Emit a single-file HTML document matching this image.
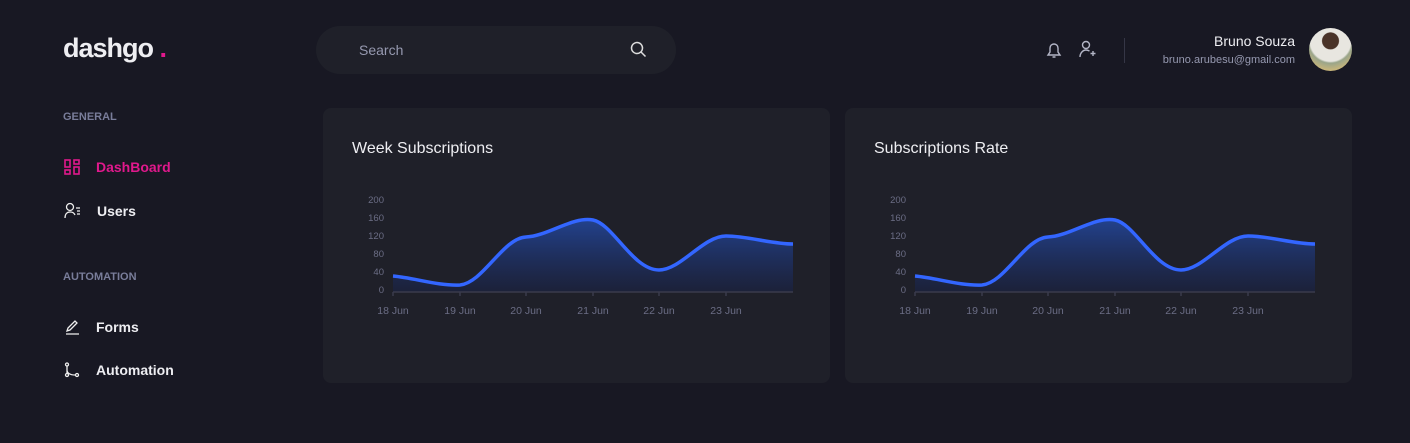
<!DOCTYPE html>
<html><head><style>
*{margin:0;padding:0;box-sizing:border-box}
body{width:1410px;height:443px;background:#181823;font-family:"Liberation Sans",sans-serif;color:#eeeef2;position:relative;overflow:hidden}
.abs{position:absolute}
.logo{left:63px;top:33px;font-size:27px;font-weight:bold;letter-spacing:-1px}
.logo span{color:#e0188c}
.sec{left:63px;font-size:11px;font-weight:bold;color:#797d9a}
.nav{left:64px;display:flex;align-items:center;font-size:14px;font-weight:bold}
.nav svg{margin-right:16px}
.search{left:316px;top:26px;width:360px;height:48px;border-radius:24px;background:#1f2029}
.search span{position:absolute;left:43px;top:16px;font-size:14px;color:#9699b0}
.card{top:108px;width:507px;height:275px;background:#1f2029;border-radius:8px}
.card h2{position:absolute;left:29px;top:32px;font-size:16px;font-weight:normal}
</style></head><body>
<div class="abs logo">dashgo<span> .</span></div>
<div class="abs sec" style="top:111px">GENERAL</div>
<div class="abs nav" style="top:159px;color:#e0188c"><svg width="16" height="16" viewBox="0 0 16 16" fill="none" stroke="#e0188c" stroke-width="1.6"><rect x="1" y="1" width="5" height="7"/><rect x="10" y="1" width="5" height="4"/><rect x="1" y="11" width="5" height="4"/><rect x="10" y="8" width="5" height="7"/></svg>DashBoard</div>
<div class="abs nav" style="top:202px"><svg width="17" height="17" viewBox="0 0 17 17" fill="none" stroke="#eee" stroke-width="1.3"><circle cx="6" cy="5" r="3.5"/><path d="M1 16c0-4 2-6 5-6s4 1 5 3M12 6h4M13 9h3M13 12h3"/></svg>Users</div>
<div class="abs sec" style="top:271px">AUTOMATION</div>
<div class="abs nav" style="top:319px"><svg width="16" height="16" viewBox="0 0 16 16" fill="none" stroke="#eee" stroke-width="1.3"><path d="M2 15h13M3 12l1-3 7-7 2 2-7 7z"/></svg>Forms</div>
<div class="abs nav" style="top:362px"><svg width="16" height="16" viewBox="0 0 16 16" fill="none" stroke="#eee" stroke-width="1.3"><circle cx="3" cy="2.5" r="1.5"/><circle cx="13" cy="13" r="1.5"/><circle cx="3" cy="13" r="1.5"/><path d="M3 4v7M3 8c0 3 3 5 8 5"/></svg>Automation</div>

<div class="abs search"><span>Search</span><svg class="abs" style="left:314px;top:15px" width="17" height="17" viewBox="0 0 17 17" fill="none" stroke="#ddd" stroke-width="1.5"><circle cx="7" cy="7" r="5.5"/><path d="M11 11l4.5 4.5"/></svg></div>

<svg class="abs" style="left:1045px;top:41px" width="18" height="18" viewBox="0 0 18 18" fill="none" stroke="#b3b5c6" stroke-width="1.4"><path d="M3 14h12l-2-3V7a4 4 0 0 0-8 0v4zM7.5 16h3"/></svg>
<svg class="abs" style="left:1079px;top:40px" width="18" height="18" viewBox="0 0 18 18" fill="none" stroke="#b3b5c6" stroke-width="1.4"><circle cx="7" cy="5" r="3.5"/><path d="M1 17c0-4 3-7 6-7 1.5 0 2.5.5 3.5 1M14 11v5M11.5 13.5h5"/></svg>
<div class="abs" style="left:1124px;top:38px;width:1px;height:25px;background:#353646"></div>
<div class="abs" style="right:115px;top:33px;font-size:14px;text-align:right">Bruno Souza</div>
<div class="abs" style="right:115px;top:54px;font-size:11px;color:#9699b0">bruno.arubesu@gmail.com</div>
<div class="abs" style="left:1309px;top:28px;width:43px;height:43px;border-radius:50%;background:radial-gradient(circle at 50% 30%,#4a3328 0 22%,#e8e6e0 24% 55%,#9aa58a 60%,#c9b67a 80%)"></div>

<div class="abs card" style="left:323px"><h2>Week Subscriptions</h2></div>
<div class="abs card" style="left:845px"><h2>Subscriptions Rate</h2></div>

<svg class="abs" style="left:0;top:0" width="1410" height="443">
<defs><linearGradient id="g" x1="0" y1="0" x2="0" y2="1"><stop offset="0" stop-color="#2348a0" stop-opacity=".85"/><stop offset="1" stop-color="#1a2244" stop-opacity=".6"/></linearGradient>
<g id="ch">
<path d="M70,168 C92,170 115,178 137,177 C160,175 180,130 203,129 C225,128 250,108 270,112 C290,116 310,162 336,162 C358,162 380,128 403,128 C425,128 448,136 470,136 L470,184 L70,184Z" fill="url(#g)"/>
<path d="M70,168 C92,170 115,178 137,177 C160,175 180,130 203,129 C225,128 250,108 270,112 C290,116 310,162 336,162 C358,162 380,128 403,128 C425,128 448,136 470,136" fill="none" stroke="#3366ff" stroke-width="3.5"/>
<path d="M70,184H470M70,184v4M137,184v4M203,184v4M270,184v4M336,184v4M403,184v4" stroke="#3a3b4c" stroke-width="1.5"/>
<g font-size="9.5" fill="#6b6d85" text-anchor="end" font-family="Liberation Sans">
<text x="61" y="95">200</text><text x="61" y="113">160</text><text x="61" y="131">120</text><text x="61" y="149">80</text><text x="61" y="167">40</text><text x="61" y="185">0</text></g>
<g font-size="10.5" fill="#6b6d85" text-anchor="middle" font-family="Liberation Sans">
<text x="70" y="206">18 Jun</text><text x="137" y="206">19 Jun</text><text x="203" y="206">20 Jun</text><text x="270" y="206">21 Jun</text><text x="336" y="206">22 Jun</text><text x="403" y="206">23 Jun</text></g>
</g></defs>
<use href="#ch" x="323" y="108"/>
<use href="#ch" x="845" y="108"/>
</svg>
</body></html>
